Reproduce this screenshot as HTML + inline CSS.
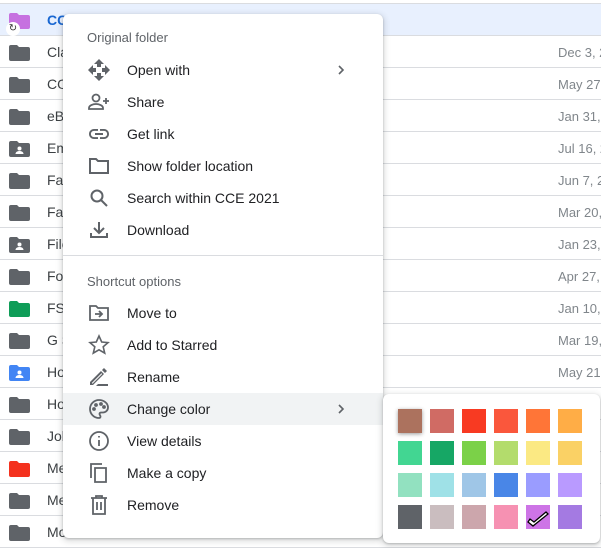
<!DOCTYPE html><html><head><style>
*{margin:0;padding:0;box-sizing:border-box}
body{width:601px;height:546px;overflow:hidden;background:#fff;font-family:"Liberation Sans",Arial,sans-serif;position:relative}
.row{position:absolute;left:0;width:601px;height:32px;border-bottom:1px solid #dadce0}
.row .n{position:absolute;left:47px;top:8px;font-size:14px;color:#3c4043}
.row .d{position:absolute;left:558px;top:9px;font-size:13px;color:#80868b;white-space:nowrap}
.f{position:absolute;left:9px;top:9px;width:21px;height:16px}
.menu{position:absolute;left:63px;top:14px;width:320px;height:524px;background:#fff;border-radius:6px;box-shadow:0 2px 6px 2px rgba(60,64,67,.15),0 1px 2px rgba(60,64,67,.3)}
.hdr{position:absolute;left:24px;font-size:13px;color:#5f6368}
.it{position:absolute;left:0;width:320px;height:32px}
.it .t{position:absolute;left:64px;top:8px;font-size:14px;color:#202124}
.it svg{position:absolute;left:24px;top:4px}
.it svg.ch{left:270px;top:8px}
.pal{position:absolute;left:383px;top:394px;width:217px;height:149px;background:#fff;border-radius:6px;box-shadow:0 2px 6px 2px rgba(60,64,67,.15),0 1px 2px rgba(60,64,67,.3)}
.sw{position:absolute;width:24px;height:24px}
</style></head><body>
<div class="row" style="background:#e8f0fe;border-top:1px solid #dadce0;top:3px;height:33px"><svg class="f" viewBox="0 0 21 16" style="top:9px"><path d="M0 2a2 2 0 0 1 2-2h6l2 2h9a2 2 0 0 1 2 2v10a2 2 0 0 1-2 2H2a2 2 0 0 1-2-2z" fill="#c671e0"/></svg><div style="position:absolute;left:6px;top:18px;width:14px;height:14px;border-radius:7px;background:#fff;font-size:10px;text-align:center;line-height:14px;color:#333">↻</div><span class="n" style="color:#1967d2;font-weight:bold">CC</span></div>
<div id="rows"></div>
<script>
var r=[["Cla","Dec 3, 2","#5f6368",0],["CO","May 27,","#5f6368",0],["eB","Jan 31,","#5f6368",0],["Em","Jul 16, 2","#5f6368",1],["Fac","Jun 7, 2","#5f6368",0],["Fai","Mar 20,","#5f6368",0],["File","Jan 23,","#5f6368",1],["For","Apr 27,","#5f6368",0],["FS","Jan 10,","#0f9d58",0],["G S","Mar 19,","#5f6368",0],["Ho","May 21,","#4285f4",1],["Ho","","#5f6368",0],["Jol","","#5f6368",0],["Me","","#f4321e",0],["Me","","#5f6368",0],["Mo","","#5f6368",0]];
var h="";r.forEach(function(x,i){var t=36+32*i;h+='<div class="row" style="top:'+t+'px"><svg class="f" viewBox="0 0 21 16"><path d="M0 2a2 2 0 0 1 2-2h6l2 2h9a2 2 0 0 1 2 2v10a2 2 0 0 1-2 2H2a2 2 0 0 1-2-2z" fill="'+x[2]+'"/>'+(x[3]?'<circle cx="10.5" cy="7.5" r="2" fill="#fff"/><path d="M6.5 13c0-2 2-3 4-3s4 1 4 3z" fill="#fff"/>':'')+'</svg><span class="n">'+x[0]+'</span><span class="d">'+x[1]+'</span></div>'});
document.getElementById("rows").innerHTML=h;
</script>
<div class="menu">
<div class="hdr" style="top:16px">Original folder</div>
<div class="it" style="top:40px"><svg width="24" height="24" viewBox="0 0 24 24" fill="#5f6368"><path d="M10 9h4V6h3l-5-5-5 5h3v3zm-1 1H6V7l-5 5 5 5v-3h3v-4zm14 2l-5-5v3h-3v4h3v3l5-5zm-9 3h-4v3H7l5 5 5-5h-3v-3z"/></svg><span class="t">Open with</span><svg class="ch" width="16" height="16" viewBox="0 0 16 16" fill="none" stroke="#5f6368" stroke-width="1.6"><path d="M6 4l4 4-4 4"/></svg></div>
<div class="it" style="top:72px"><svg width="24" height="24" viewBox="0 0 24 24" fill="none" stroke="#5f6368" stroke-width="1.8"><circle cx="9" cy="8" r="3.5"/><path d="M2 19v-1c0-2.5 4-4 7-4s7 1.5 7 4v1z"/><path d="M19 8v6M16 11h6"/></svg><span class="t">Share</span></div>
<div class="it" style="top:104px"><svg width="24" height="24" viewBox="0 0 24 24" fill="#5f6368"><path d="M3.9 12c0-1.7 1.4-3.1 3.1-3.1h4V7H7c-2.8 0-5 2.2-5 5s2.2 5 5 5h4v-1.9H7c-1.7 0-3.1-1.4-3.1-3.1zM8 13h8v-2H8v2zm9-6h-4v1.9h4c1.7 0 3.1 1.4 3.1 3.1s-1.4 3.1-3.1 3.1h-4V17h4c2.8 0 5-2.2 5-5s-2.2-5-5-5z"/></svg><span class="t">Get link</span></div>
<div class="it" style="top:136px"><svg width="24" height="24" viewBox="0 0 24 24" fill="none" stroke="#5f6368" stroke-width="2"><path d="M3 5h6l2 2h10v12H3z"/></svg><span class="t">Show folder location</span></div>
<div class="it" style="top:168px"><svg width="24" height="24" viewBox="0 0 24 24" fill="none" stroke="#5f6368" stroke-width="2"><circle cx="10" cy="10" r="5.5"/><path d="M14 14l6 6"/></svg><span class="t">Search within CCE 2021</span></div>
<div class="it" style="top:200px"><svg width="24" height="24" viewBox="0 0 24 24" fill="none" stroke="#5f6368" stroke-width="2"><path d="M12 4v10M7 10l5 5 5-5M4 15v4h16v-4"/></svg><span class="t">Download</span></div>
<div style="position:absolute;left:0;top:241px;width:320px;height:1px;background:#dadce0"></div>
<div class="hdr" style="top:260px">Shortcut options</div>
<div class="it" style="top:283px"><svg width="24" height="24" viewBox="0 0 24 24" fill="none" stroke="#5f6368" stroke-width="1.8"><path d="M3 5h6l2 2h10v12H3z"/><path d="M8 13h7M12 10l3 3-3 3"/></svg><span class="t">Move to</span></div>
<div class="it" style="top:315px"><svg width="24" height="24" viewBox="0 0 24 24" fill="none" stroke="#5f6368" stroke-width="1.6"><path d="M12 3l2.7 6 6.3.6-4.8 4.2 1.5 6.3L12 16.8 6.3 20.1l1.5-6.3L3 9.6 9.3 9z"/></svg><span class="t">Add to Starred</span></div>
<div class="it" style="top:347px"><svg width="24" height="24" viewBox="0 0 24 24" fill="#5f6368"><path d="M3 20v-3L14 6l3 3L6 20zm2-2.2v.7h.7l9.5-9.5-.7-.7zM15 5l2-2 3 3-2 2zM11 19h10v2H9z"/></svg><span class="t">Rename</span></div>
<div class="it" style="top:379px;background:#f1f3f4"><svg width="24" height="24" viewBox="0 0 24 24" fill="none" stroke="#5f6368" stroke-width="1.8"><path d="M12 3a9 9 0 0 0 0 18c1 0 1.5-.7 1.5-1.5 0-1.2-1-1.5-1-2.5s.8-1.5 1.8-1.5H16a5 5 0 0 0 5-5c0-4.2-4-7.5-9-7.5z"/><circle cx="7" cy="12" r="1" fill="#5f6368"/><circle cx="9" cy="8" r="1" fill="#5f6368"/><circle cx="14" cy="7" r="1" fill="#5f6368"/><circle cx="17" cy="10" r="1" fill="#5f6368"/></svg><span class="t">Change color</span><svg class="ch" width="16" height="16" viewBox="0 0 16 16" fill="none" stroke="#5f6368" stroke-width="1.6"><path d="M6 4l4 4-4 4"/></svg></div>
<div class="it" style="top:411px"><svg width="24" height="24" viewBox="0 0 24 24" fill="none" stroke="#5f6368" stroke-width="1.8"><circle cx="12" cy="12" r="9"/><path d="M12 11v6M12 7v1.5"/></svg><span class="t">View details</span></div>
<div class="it" style="top:443px"><svg width="24" height="24" viewBox="0 0 24 24" fill="none" stroke="#5f6368" stroke-width="1.8"><path d="M4 17V3h11"/><path d="M8 7h11v14H8z"/></svg><span class="t">Make a copy</span></div>
<div class="it" style="top:475px"><svg width="24" height="24" viewBox="0 0 24 24" fill="none" stroke="#5f6368" stroke-width="1.8"><path d="M4 5h16M9 5V3h6v2M6 5v16h12V5M10 9v8M14 9v8"/></svg><span class="t">Remove</span></div>
</div>
<div class="pal" id="pal"></div>
<script>
var c=["#ac725e","#d06b64","#f83a22","#fa573c","#ff7537","#ffad46","#42d692","#16a765","#7bd148","#b3dc6c","#fbe983","#fad165","#92e1c0","#9fe1e7","#9fc6e7","#4986e7","#9a9cff","#b99aff","#5f6368","#cabdbf","#cca6ac","#f691b2","#cd74e6","#a47ae2"];
var p="";c.forEach(function(x,i){p+='<div class="sw" style="left:'+(15+32*(i%6))+'px;top:'+(15+32*Math.floor(i/6))+'px;background:'+x+(i==0?';box-shadow:0 1px 4px rgba(0,0,0,.4)':'')+'">'+(i==22?'<svg width="24" height="24" viewBox="0 0 24 24"><path d="M2 17l5 4L22 9l-2-2L8 17l-4-3z" fill="#fff" stroke="#000" stroke-width="1.3"/></svg>':'')+'</div>'});
document.getElementById("pal").innerHTML=p;
</script>
</body></html>
